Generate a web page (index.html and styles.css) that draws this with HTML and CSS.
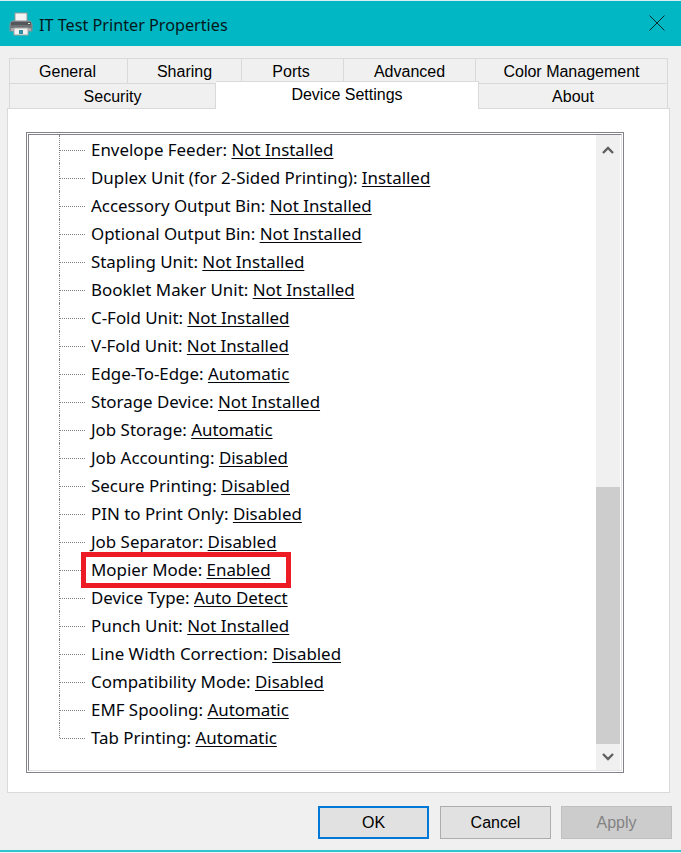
FILE: index.html
```html
<!DOCTYPE html>
<html lang="en">
<head>
  <meta charset="UTF-8">
  <meta name="viewport" content="width=device-width, initial-scale=1.0">
  <title>IT Test Printer Properties</title>
  <link rel="stylesheet" href="styles.css">
</head>
<body>
  <div class="window">
    <header class="titlebar">
      <svg class="printer-icon" width="26" height="26" viewBox="0 0 26 26">
        <rect x="7" y="2" width="12" height="9" fill="#f4f4f4" stroke="#9a9a9a"/>
        <path d="M4 10h18l2 3v7H2v-7z" fill="#6f7275" stroke="#8d9093"/>
        <rect x="3" y="11" width="20" height="3" fill="#53565a"/>
        <rect x="3" y="17" width="20" height="3" fill="#a9abad"/>
        <rect x="6" y="17" width="14" height="7" fill="#f2f2f2" stroke="#a5a5a5"/>
        <rect x="11" y="19" width="4" height="4" fill="#2f8f9c"/>
        <rect x="20" y="12" width="2" height="1" fill="#d8e8d0"/>
      </svg>
      <span class="title">IT Test Printer Properties</span>
      <svg class="close-icon" width="16" height="16" viewBox="0 0 16 16">
        <path d="M.5.5l15 15M15.500.5l-15 15" fill="none" stroke="#10282b" stroke-width="1"/>
      </svg>
    </header>

    <div class="tabs">
      <div class="tab-row">
        <div class="tab tab-general">General</div>
        <div class="tab tab-sharing">Sharing</div>
        <div class="tab tab-ports">Ports</div>
        <div class="tab tab-advanced">Advanced</div>
        <div class="tab tab-color">Color Management</div>
      </div>
      <div class="tab-row">
        <div class="tab tab-security">Security</div>
        <div class="tab tab-device active">Device Settings</div>
        <div class="tab tab-about">About</div>
      </div>
    </div>

    <main class="panel">
      <div class="tree-frame">
        <div class="tree-inner">
          <ul class="tree">
            <li class="row"><span>Envelope Feeder: <u>Not Installed</u></span></li>
            <li class="row"><span>Duplex Unit (for 2-Sided Printing): <u>Installed</u></span></li>
            <li class="row"><span>Accessory Output Bin: <u>Not Installed</u></span></li>
            <li class="row"><span>Optional Output Bin: <u>Not Installed</u></span></li>
            <li class="row"><span>Stapling Unit: <u>Not Installed</u></span></li>
            <li class="row"><span>Booklet Maker Unit: <u>Not Installed</u></span></li>
            <li class="row"><span>C-Fold Unit: <u>Not Installed</u></span></li>
            <li class="row"><span>V-Fold Unit: <u>Not Installed</u></span></li>
            <li class="row"><span>Edge-To-Edge: <u>Automatic</u></span></li>
            <li class="row"><span>Storage Device: <u>Not Installed</u></span></li>
            <li class="row"><span>Job Storage: <u>Automatic</u></span></li>
            <li class="row"><span>Job Accounting: <u>Disabled</u></span></li>
            <li class="row"><span>Secure Printing: <u>Disabled</u></span></li>
            <li class="row"><span>PIN to Print Only: <u>Disabled</u></span></li>
            <li class="row"><span>Job Separator: <u>Disabled</u></span></li>
            <li class="row"><span>Mopier Mode: <u>Enabled</u></span><i class="highlight"></i></li>
            <li class="row"><span>Device Type: <u>Auto Detect</u></span></li>
            <li class="row"><span>Punch Unit: <u>Not Installed</u></span></li>
            <li class="row"><span>Line Width Correction: <u>Disabled</u></span></li>
            <li class="row"><span>Compatibility Mode: <u>Disabled</u></span></li>
            <li class="row"><span>EMF Spooling: <u>Automatic</u></span></li>
            <li class="row last"><span>Tab Printing: <u>Automatic</u></span></li>
          </ul>
          <div class="scrollbar">
            <div class="arrow arrow-up">
              <svg width="12" height="8" viewBox="0 0 12 8"><path d="M1 7l5-5 5 5" fill="none" stroke="#606060" stroke-width="2.400"/></svg>
            </div>
            <div class="track"><div class="thumb"></div></div>
            <div class="arrow">
              <svg width="12" height="8" viewBox="0 0 12 8"><path d="M1 1l5 5 5-5" fill="none" stroke="#606060" stroke-width="2.400"/></svg>
            </div>
          </div>
        </div>
      </div>
    </main>

    <footer class="buttons">
      <div class="btn default">OK</div>
      <div class="btn">Cancel</div>
      <div class="btn disabled">Apply</div>
    </footer>
    <div class="bottom-edge"></div>
  </div>
</body>
</html>
```

FILE: styles.css
```css
*{box-sizing: border-box; margin: 0; padding: 0;}
html, body{width: 681px; height: 853px; overflow: hidden;}
body{background: #f0f0f0; font-family: "Liberation Sans", Arial, sans-serif; color: #000;}

.window{display: flex; flex-direction: column; height: 853px; border-top: 1px solid #d8eef0;}

/* title bar */
.titlebar{
  height: 45px; background: #00b7c3;
  display: flex; align-items: center;
  padding: 0 16px 0 8px;
}
.printer-icon{flex: none; margin-top: 1px;}
.title{
  font-family: "Noto Sans", sans-serif; font-size: 16.200px;
  margin: 2px 0 0 5px; flex: 1; color: #04161a;
}
.close-icon{flex: none; margin-top: -2px;}

/* tabs */
.tabs{margin: 12px 0 0 9px; width: 659px; font-size: 16px; position: relative; z-index: 1;}
.tab-row{display: flex; height: 25px;}
.tab{
  background: #f0f0f0;
  border: 1px solid #d9d9d9; border-bottom: 0; border-left: 0;
  display: flex; align-items: center; justify-content: center;
  padding-top: 1px;
}
.tab:first-child{border-left: 1px solid #d9d9d9;}
.tab-general{width: 119px; padding-right: 2px;}
.tab-sharing{width: 114px;}
.tab-ports{width: 102px; padding-right: 3px;}
.tab-advanced{width: 132px;}
.tab-color{width: 192px;}
.tab-security{width: 207px;}
.tab-device{width: 263px;}
.tab-about{width: 189px;}
.tab.active{
  background: #fff; height: 28px; margin-top: -2px;
  padding-top: 0; padding-bottom: 2px;
  border-left: 0;
}

/* panel */
.panel{
  margin-left: 7px; width: 663px; height: 685px;
  background: #fff; border: 1px solid #d9d9d9;
  padding: 23px 45px 0 18px;
}
.tree-frame{height: 641px; border: 1px solid #82828a; padding: 1px;}
.tree-inner{
  height: 100%; display: flex; background: #fff;
  border: 1px solid #e3e3e3; border-top-color: #82828a; border-left-color: #82828a;
  padding-right: 1px;
}
.tree{
  list-style: none; flex: 1; padding: 0 0 0 30px;
  font-family: "Noto Sans", sans-serif; font-size: 16.900px;
}
.row{
  height: 28px; position: relative; padding-left: 31px;
  display: flex; align-items: center; white-space: nowrap;
  border-left: 1px dotted #808080;
  color: #02060c;
}
.row::before{
  content: ""; position: absolute; left: 0; top: 15px;
  width: 25px; border-top: 1px dotted #808080;
}
.row.last{border-left-color: transparent;}
.row.last::after{
  content: ""; position: absolute; left: -1px; top: 0;
  height: 15px; border-left: 1px dotted #808080;
}
.row u{text-underline-offset: 2px;}
.highlight{
  position: absolute; left: 21px; top: -3px;
  width: 210px; height: 36px;
  border: 5px solid #ed1c24;
}

/* scrollbar */
.scrollbar{width: 24px; flex: none; display: flex; flex-direction: column; background: #f0f0f0;}
.arrow{height: 26px; flex: none; display: flex; align-items: center; justify-content: center;}
.arrow-up{height: 30px;}
.track{flex: 1; display: flex; flex-direction: column; justify-content: flex-end;}
.thumb{height: 257px; background: #cdcdcd;}

/* buttons */
.buttons{display: flex; gap: 10px; margin: 13px 0 0 318px;}
.btn{
  width: 111px; height: 33px; font-size: 16px;
  background: #e1e1e1; border: 1px solid #adadad;
  display: flex; align-items: center; justify-content: center;
}
.btn.default{border: 2px solid #0078d7; margin-right: 1px;}
.btn.disabled{background: #cccccc; border-color: #bfbfbf; color: #838383;}

.bottom-edge{margin-top: 11px; height: 2px; background: #2fc4ce;}
```
